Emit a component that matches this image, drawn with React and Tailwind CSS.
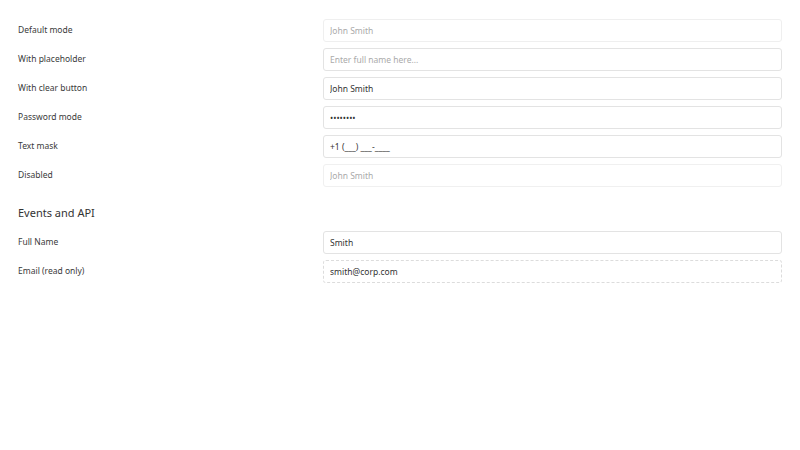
import { useState } from "react";

const font = { fontFamily: '"Noto Sans", "Open Sans", sans-serif' };

function Row({ label, children }) {
  return (
    <div className="flex items-center h-[23px]">
      <div className="w-[305px] shrink-0 text-[8.5px] leading-none text-[#3a3a3a]">{label}</div>
      <div className="flex-1 flex">{children}</div>
    </div>
  );
}

const base =
  "block w-full h-[23px] rounded-[3px] px-[6px] text-[8.5px] outline-none bg-white";

export default function App() {
  const [clear, setClear] = useState("John Smith");
  const [full, setFull] = useState("Smith");

  return (
    <div className="min-h-[450px] bg-white px-[18px] pt-[19px]" style={font}>
      <div className="flex flex-col gap-[6px]">
        <Row label="Default mode">
          <input
            className={`${base} border border-[#efefef] text-[#aaa]`}
            defaultValue="John Smith"
          />
        </Row>
        <Row label="With placeholder">
          <input
            className={`${base} border border-[#e3e3e3] text-[#333] placeholder:text-[#aaa]`}
            placeholder="Enter full name here..."
          />
        </Row>
        <Row label="With clear button">
          <input
            className={`${base} border border-[#e3e3e3] text-[#333]`}
            value={clear}
            onChange={(e) => setClear(e.target.value)}
          />
        </Row>
        <Row label="Password mode">
          <input
            type="password"
            className={`${base} border border-[#e3e3e3] text-[#333] text-[7px]`}
            defaultValue="password"
          />
        </Row>
        <Row label="Text mask">
          <input
            className={`${base} border border-[#e3e3e3] text-[#333]`}
            defaultValue="+1 (___) ___-____"
          />
        </Row>
        <Row label="Disabled">
          <input
            disabled
            className={`${base} border border-[#f0f0f0] text-[#aaa]`}
            defaultValue="John Smith"
          />
        </Row>
      </div>

      <div className="mt-[17px] mb-[11px] h-[16px] flex items-center text-[11px] leading-none text-[#333]">
        Events and API
      </div>

      <div className="flex flex-col gap-[6px]">
        <Row label="Full Name">
          <input
            className={`${base} border border-[#e3e3e3] text-[#333]`}
            value={full}
            onChange={(e) => setFull(e.target.value)}
          />
        </Row>
        <Row label="Email (read only)">
          <input
            readOnly
            className={`${base} border border-dashed border-[#dcdcdc] text-[#333]`}
            value="smith@corp.com"
          />
        </Row>
      </div>
    </div>
  );
}
